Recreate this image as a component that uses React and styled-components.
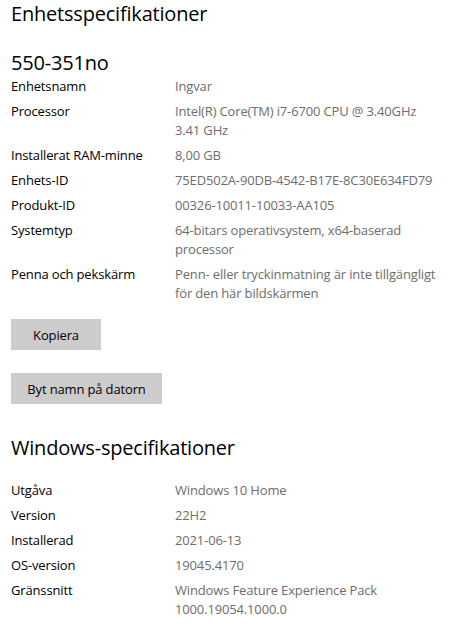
import React from "react";
import styled, { createGlobalStyle } from "styled-components";

const Global = createGlobalStyle`
  html, body { margin: 0; padding: 0; background: #fff; }
  body { font-family: "Open Sans", "Noto Sans", sans-serif; color: #000; }
`;

const Page = styled.div`
  width: 466px;
  height: 628px;
  overflow: hidden;
  padding: 0 11px;
  box-sizing: border-box;
  display: flex;
  flex-direction: column;
`;

const Heading = styled.h1`
  margin: ${(p) => p.$top}px 0 0 0;
  font-size: 20px;
  font-weight: 400;
  line-height: 28px;
  letter-spacing: -0.2px;
`;

const DeviceName = styled.div`
  margin-top: 22px;
  font-size: 20px;
  line-height: 26px;
  letter-spacing: -0.2px;
`;

const List = styled.div`
  display: flex;
  flex-direction: column;
  gap: 6px;
  margin-top: ${(p) => p.$top}px;
`;

const Row = styled.div`
  display: grid;
  grid-template-columns: 164px 1fr;
  font-size: 13px;
  line-height: 19px;
  letter-spacing: -0.15px;
`;

const Label = styled.div`
  color: #000;
`;

const Value = styled.div`
  color: #6d6d6d;
`;

const Button = styled.button`
  align-self: flex-start;
  margin-top: ${(p) => p.$top}px;
  height: 31px;
  width: ${(p) => p.$w}px;
  border: none;
  background: #cccccc;
  font-family: inherit;
  font-size: 13px;
  letter-spacing: -0.15px;
  color: #000;
  padding: 0;
`;

const Line = styled.span`
  display: block;
`;

const device = [
  ["Enhetsnamn", ["Ingvar"]],
  ["Processor", ["Intel(R) Core(TM) i7-6700 CPU @ 3.40GHz", "3.41 GHz"]],
  ["Installerat RAM-minne", ["8,00 GB"]],
  ["Enhets-ID", ["75ED502A-90DB-4542-B17E-8C30E634FD79"]],
  ["Produkt-ID", ["00326-10011-10033-AA105"]],
  ["Systemtyp", ["64-bitars operativsystem, x64-baserad", "processor"]],
  ["Penna och pekskärm", ["Penn- eller tryckinmatning är inte tillgängligt", "för den här bildskärmen"]],
];

const windows = [
  ["Utgåva", ["Windows 10 Home"]],
  ["Version", ["22H2"]],
  ["Installerad", ["2021-06-13"]],
  ["OS-version", ["19045.4170"]],
  ["Gränssnitt", ["Windows Feature Experience Pack", "1000.19054.1000.0"]],
];

function Spec({ rows, top }) {
  return (
    <List $top={top}>
      {rows.map(([k, v]) => (
        <Row key={k}>
          <Label>{k}</Label>
          <Value>
            {v.map((l) => (
              <Line key={l}>{l}</Line>
            ))}
          </Value>
        </Row>
      ))}
    </List>
  );
}

export default function App() {
  return (
    <>
      <Global />
      <Page>
        <Heading $top={0}>Enhetsspecifikationer</Heading>
        <DeviceName>550-351no</DeviceName>
        <Spec rows={device} top={1} />
        <Button $top={16} $w={90}>Kopiera</Button>
        <Button $top={23} $w={151}>Byt namn på datorn</Button>
        <Heading $top={30}>Windows-specifikationer</Heading>
        <Spec rows={windows} top={19} />
      </Page>
    </>
  );
}
